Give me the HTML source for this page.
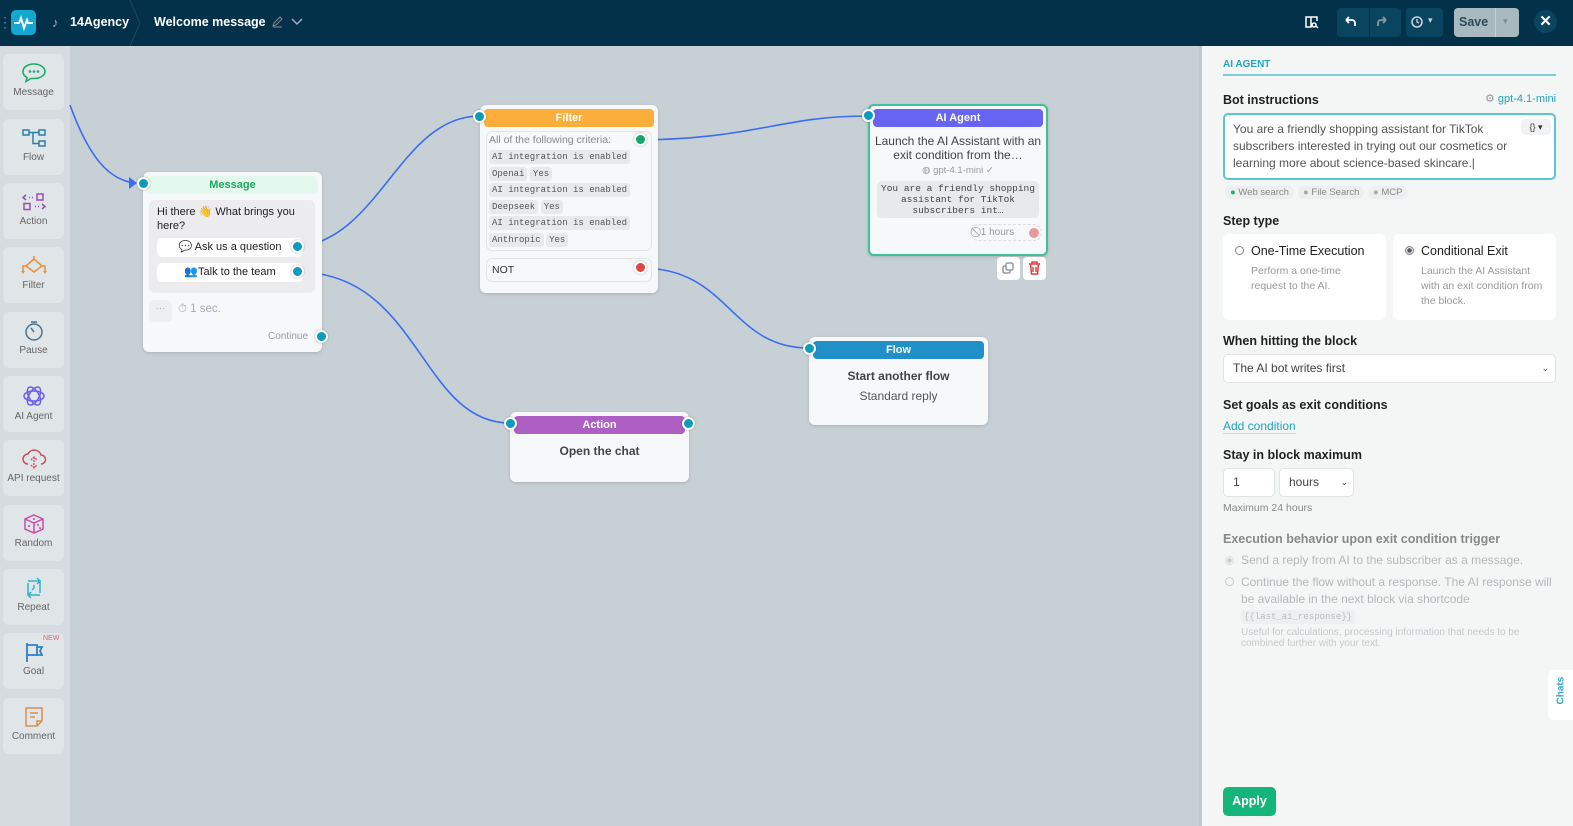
<!DOCTYPE html>
<html><head><meta charset="utf-8"><style>
*{box-sizing:border-box;margin:0;padding:0}
body{width:1573px;height:826px;overflow:hidden;font-family:"Liberation Sans",sans-serif;background:#c6d0d5;position:relative;color:#333}
.abs{position:absolute}
.top{left:0;top:0;width:1573px;height:46px;background:#03314a}
.side{left:0;top:46px;width:70px;height:780px;background:#d5dbde}
.sb{position:absolute;left:3px;width:61px;height:56px;background:#e0e5e8;border-radius:6px;text-align:center;font-size:10px;color:#666}
.sb svg{display:block;margin:8px auto 3px}
.node{position:absolute;background:#f7f8fa;border-radius:6px;box-shadow:0 1px 3px rgba(0,0,0,.15)}
.hdr{position:absolute;left:4px;right:4px;top:4px;height:18px;border-radius:4px;text-align:center;color:#fff;font-weight:bold;font-size:11px;line-height:18px}
.dot{position:absolute;width:13px;height:13px;border-radius:50%;border:2px solid #fff;background:#0a9cba;box-shadow:0 0 2px rgba(0,0,0,.3)}
.mono{font-family:"Liberation Mono",monospace;font-size:9px;line-height:12px;color:#555;background:#e8e9eb;border-radius:3px;padding:1px 3px;display:inline-block;vertical-align:top}
.panel{left:1199px;top:46px;width:374px;height:780px;background:#f4f6f6;border-left:3px solid #bfc9ce}
.lbl{position:absolute;left:22px;font-weight:bold;font-size:12.5px;color:#222}
.card{position:absolute;background:#fff;border-radius:6px}
.gray{color:#999}
</style></head><body>
<div class="abs top">
  <div class="abs" style="left:3px;top:15px;color:#9ab;font-size:12px;line-height:5px">·<br>·<br>·</div>
  <div class="abs" style="left:11px;top:10px;width:25px;height:25px;background:#15a8cf;border-radius:5px">
    <svg width="25" height="25" viewBox="0 0 25 25"><path d="M3 13h5l2-5 3 10 3-8 1 3h5" stroke="#fff" stroke-width="2" fill="none"/></svg></div>
  <div class="abs" style="left:52px;top:15px;color:#aab;font-size:13px">♪</div>
  <div class="abs" style="left:70px;top:15px;color:#fff;font-weight:bold;font-size:12.5px">14Agency</div>
  <svg class="abs" style="left:128px;top:0" width="14" height="46"><path d="M2 0l10 23-10 23" stroke="#23475c" fill="none"/></svg>
  <div class="abs" style="left:154px;top:15px;color:#fff;font-weight:bold;font-size:12.5px">Welcome message</div>
  <svg class="abs" style="left:271px;top:16px" width="12" height="12"><path d="M2 10l1-3 6-6 2 2-6 6zM2 11h9" stroke="#889" fill="none"/></svg>
  <svg class="abs" style="left:291px;top:18px" width="12" height="8"><path d="M1 1l5 5 5-5" stroke="#aab" stroke-width="1.5" fill="none"/></svg>
  <svg class="abs" style="left:1305px;top:15px" width="14" height="14"><path d="M1 2h5v10H1zM6 2h6v4M9 8a2 2 0 1 0 0.1 0M11 11l2 2" stroke="#fff" stroke-width="1.5" fill="none"/></svg>
  <div class="abs" style="left:1337px;top:8px;width:64px;height:29px;background:#0a4560;border-radius:4px"></div>
  <div class="abs" style="left:1369px;top:8px;width:1px;height:29px;background:#03314a"></div>
  <svg class="abs" style="left:1342px;top:14px" width="16" height="16"><path d="M4 6h6a3 3 0 0 1 3 3v3M4 6l3-3M4 6l3 3" stroke="#fff" stroke-width="1.8" fill="none"/></svg>
  <svg class="abs" style="left:1374px;top:14px" width="16" height="16"><path d="M12 6H7a3 3 0 0 0-3 3v3M12 6l-3-3M12 6l-3 3" stroke="#889aa5" stroke-width="1.8" fill="none"/></svg>
  <div class="abs" style="left:1406px;top:8px;width:37px;height:29px;background:#0a4560;border-radius:4px"></div>
  <svg class="abs" style="left:1410px;top:15px" width="14" height="14"><circle cx="7" cy="7" r="5" stroke="#ccd" stroke-width="1.6" fill="none"/><path d="M7 4v3l2 1" stroke="#ccd" stroke-width="1.4" fill="none"/></svg>
  <div class="abs" style="left:1428px;top:15px;color:#ccd;font-size:9px">▾</div>
  <div class="abs" style="left:1454px;top:8px;width:65px;height:29px;background:#a9b9c0;border-radius:4px"></div>
  <div class="abs" style="left:1459px;top:15px;color:#2c4b5b;font-weight:bold;font-size:12.5px">Save</div>
  <div class="abs" style="left:1495px;top:8px;width:1px;height:29px;background:#c5d0d5"></div>
  <div class="abs" style="left:1503px;top:16px;color:#789;font-size:9px">▾</div>
  <div class="abs" style="left:1534px;top:10px;width:23px;height:23px;background:#0a4560;border-radius:50%;color:#fff;text-align:center;line-height:23px;font-size:15px;font-weight:bold">✕</div>
</div>

<div class="abs side">
  <div class="sb" style="top:8px"><svg width="26" height="22" viewBox="0 0 26 22"><path d="M13 2C7 2 2 5 2 9.5c0 3 2 5 4 6l-1 4 5-3h3c6 0 11-3 11-7S19 2 13 2z" stroke="#1dab6a" stroke-width="1.6" fill="none"/><circle cx="9" cy="9.5" r="1.3" fill="#1dab6a"/><circle cx="13" cy="9.5" r="1.3" fill="#1dab6a"/><circle cx="17" cy="9.5" r="1.3" fill="#1dab6a"/></svg>Message</div>
  <div class="sb" style="top:73px"><svg width="26" height="22"><rect x="2" y="3" width="6" height="5" stroke="#2d7fa6" fill="none" stroke-width="1.5"/><rect x="18" y="3" width="6" height="5" stroke="#2d7fa6" fill="none" stroke-width="1.5"/><rect x="18" y="14" width="6" height="5" stroke="#2d7fa6" fill="none" stroke-width="1.5"/><path d="M8 5.5h10M12 5.5v11h6" stroke="#2d7fa6" stroke-width="1.5" fill="none"/></svg>Flow</div>
  <div class="sb" style="top:137px"><svg width="26" height="22"><path d="M5 4L2 6.5 5 9M8 6.5h1M11 6.5h1M21 13l3 2.5-3 2.5M14 15.5h1M17 15.5h1" stroke="#9b4cb8" stroke-width="1.5" fill="none"/><rect x="16" y="3" width="6" height="6" stroke="#9b4cb8" fill="none" stroke-width="1.5"/><rect x="3" y="12.5" width="6" height="6" stroke="#9b4cb8" fill="none" stroke-width="1.5"/></svg>Action</div>
  <div class="sb" style="top:201px"><svg width="28" height="22"><path d="M14 1v3M14 4l-8 7 8 6 8-6zM6 11H3v5M22 11h3v5" stroke="#e8903a" stroke-width="1.5" fill="none"/><path d="M1 16h4l-2 3zM23 16h4l-2 3z" fill="#e8903a"/></svg>Filter</div>
  <div class="sb" style="top:266px"><svg width="26" height="22"><circle cx="13" cy="12" r="8" stroke="#4a7390" stroke-width="1.5" fill="none"/><path d="M10 2h6M13 12l-3-4" stroke="#4a7390" stroke-width="1.5"/></svg>Pause</div>
  <div class="sb" style="top:330px"><svg width="26" height="24"><g stroke="#6b5cf0" stroke-width="1.5" fill="none"><ellipse cx="13" cy="12" rx="10" ry="5"/><ellipse cx="13" cy="12" rx="10" ry="5" transform="rotate(60 13 12)"/><ellipse cx="13" cy="12" rx="10" ry="5" transform="rotate(120 13 12)"/></g></svg>AI Agent</div>
  <div class="sb" style="top:394px"><svg width="26" height="22"><path d="M7 16a5 5 0 0 1 0-10 7 7 0 0 1 13 1 4 4 0 0 1 0 9" stroke="#d14a58" stroke-width="1.5" fill="none"/><path d="M13 9v11M10 12l3-3 3 3M10 17l3 3 3-3" stroke="#d14a58" stroke-width="1.3" fill="none" stroke-dasharray="2 1"/></svg>API request</div>
  <div class="sb" style="top:459px"><svg width="26" height="22"><path d="M13 2l9 4v10l-9 4-9-4V6zM4 6l9 4 9-4M13 10v10" stroke="#c94aa8" stroke-width="1.5" fill="none"/><circle cx="13" cy="6" r="1" fill="#c94aa8"/><circle cx="8" cy="13" r="1" fill="#c94aa8"/><circle cx="17" cy="12" r="1" fill="#c94aa8"/><circle cx="19" cy="15" r="1" fill="#c94aa8"/></svg>Random</div>
  <div class="sb" style="top:523px"><svg width="26" height="22"><path d="M7 4h12v12M19 18H7V6M16 1l3 3-3 3M10 15l-3 3 3 3M13 8v3l-2 2" stroke="#2fb3d0" stroke-width="1.5" fill="none"/></svg>Repeat</div>
  <div class="sb" style="top:587px"><svg width="26" height="22"><path d="M6 2v19M6 4h10v10H6M16 6h5l-2 4 2 4h-5" stroke="#2d7fc8" stroke-width="1.8" fill="none"/></svg>Goal<div class="abs" style="left:40px;top:2px;color:#e0646a;font-size:7px">NEW</div></div>
  <div class="sb" style="top:652px"><svg width="26" height="22"><path d="M5 2h16v13l-5 5H5zM16 20v-5h5M9 7h8M9 11h5" stroke="#d89050" stroke-width="1.5" fill="none"/></svg>Comment</div>
</div>

<svg class="abs" style="left:0;top:0" width="1200" height="826">
<g stroke="#3a6df0" stroke-width="1.6" fill="none">
<path d="M70 105C90 160 110 180 135 183"/>
<path d="M297 247C380 240 400 116 480 116"/>
<path d="M297 272C420 272 420 423 510 423"/>
<path d="M641 140C760 138 780 116 868 116"/>
<path d="M641 268C730 268 730 348 809 348"/>
</g>
<path d="M129 177l8 6-8 6z" fill="#3a6df0"/>
</svg>

<!-- Message node -->
<div class="node" style="left:143px;top:172px;width:179px;height:180px">
  <div class="hdr" style="background:#e4f9ee;color:#1aaa5d">Message</div>
  <div class="abs" style="left:6px;top:28px;width:166px;height:93px;background:#ececee;border-radius:6px"></div>
  <div class="abs" style="left:14px;top:33px;font-size:11px;color:#222;width:150px;line-height:14px">Hi there 👋 What brings you here?</div>
  <div class="abs" style="left:14px;top:66px;width:146px;height:19px;background:#fff;border-radius:5px;font-size:11px;line-height:19px;text-align:center;color:#222"><span style="color:#b9a3d9">💬</span> Ask us a question</div>
  <div class="abs" style="left:14px;top:91px;width:146px;height:19px;background:#fff;border-radius:5px;font-size:11px;line-height:19px;text-align:center;color:#222"><span style="color:#6a3fa0">👥</span>Talk to the team</div>
  <div class="abs" style="left:6px;top:128px;width:23px;height:22px;background:#eeeff1;border-radius:5px;color:#aaa;font-size:10px;text-align:center;line-height:18px">···</div>
  <div class="abs gray" style="left:35px;top:131px;font-size:11.5px;color:#aab">⏱ 1 sec.</div>
  <div class="abs" style="left:125px;top:159px;font-size:10px;color:#99a">Continue</div>
</div>
<div class="dot" style="left:137px;top:177px"></div>
<div class="dot" style="left:291px;top:240px"></div>
<div class="dot" style="left:291px;top:265px"></div>
<div class="dot" style="left:315px;top:330px"></div>

<!-- Filter -->
<div class="node" style="left:480px;top:105px;width:178px;height:188px">
  <div class="hdr" style="background:#fbae3c">Filter</div>
  <div class="abs" style="left:6px;top:26px;width:166px;height:120px;border:1px solid #e3e4e6;border-radius:6px;background:#f7f8fa"></div>
  <div class="abs" style="left:9px;top:29px;font-size:10.5px;color:#888">All of the following criteria:</div>
  <div class="abs" style="left:9px;top:45px;line-height:16.5px;width:165px;font-size:9px">
    <span class="mono">AI integration is enabled</span><br>
    <span class="mono">Openai</span> <span class="mono">Yes</span><br>
    <span class="mono">AI integration is enabled</span><br>
    <span class="mono">Deepseek</span> <span class="mono">Yes</span><br>
    <span class="mono">AI integration is enabled</span><br>
    <span class="mono">Anthropic</span> <span class="mono">Yes</span>
  </div>
  <div class="abs" style="left:6px;top:153px;width:166px;height:24px;border:1px solid #e3e4e6;border-radius:6px;font-size:10.5px;line-height:22px;padding-left:5px">NOT</div>
</div>
<div class="dot" style="left:473px;top:110px"></div>
<div class="dot" style="left:634px;top:133px;background:#13a86b"></div>
<div class="dot" style="left:634px;top:261px;background:#e04848"></div>

<!-- AI Agent -->
<div class="node" style="left:868px;top:104px;width:180px;height:152px;border:2px solid #3ec098">
  <div class="hdr" style="background:#6764f2;left:3px;right:3px;top:3px">AI Agent</div>
  <div class="abs" style="left:4px;right:4px;top:28px;text-align:center;font-size:12px;color:#444;line-height:14px">Launch the AI Assistant with an exit condition from the…</div>
  <div class="abs" style="left:0;right:0;top:59px;text-align:center;font-size:9.5px;color:#999">◍ gpt-4.1-mini ✓</div>
  <div class="abs" style="left:7px;right:7px;top:75px;height:37px;background:#e8e9eb;border-radius:5px;text-align:center;font-family:'Liberation Mono',monospace;font-size:9.5px;line-height:11px;color:#444;padding-top:2px">You are a friendly shopping assistant for TikTok subscribers int…</div>
  <div class="abs" style="left:100px;top:118px;width:72px;height:17px;border:1px dashed #ddd;border-radius:9px;font-size:10px;color:#999;line-height:15px;padding-left:7px">⃠ 1 hours</div>
  <div class="abs" style="left:159px;top:122px;width:10px;height:10px;border-radius:50%;background:#e89a9a"></div>
</div>
<div class="dot" style="left:862px;top:109px"></div>
<div class="abs" style="left:997px;top:257px;width:23px;height:23px;background:#fff;border-radius:4px">
<svg width="23" height="23"><rect x="6" y="9" width="7" height="7" rx="1.5" stroke="#889" fill="none" stroke-width="1.3"/><rect x="9" y="6" width="7" height="7" rx="1.5" stroke="#889" fill="#fff" stroke-width="1.3"/></svg></div>
<div class="abs" style="left:1023px;top:257px;width:23px;height:23px;background:#fff;border-radius:4px">
<svg width="23" height="23"><path d="M6 7h11M9 7V5h5v2M7.5 7l1 10h6l1-10M10 10v5M13 10v5" stroke="#e53b3b" stroke-width="1.5" fill="none"/></svg></div>

<!-- Flow -->
<div class="node" style="left:809px;top:337px;width:179px;height:88px">
  <div class="hdr" style="background:#2290c8">Flow</div>
  <div class="abs" style="left:0;right:0;top:32px;text-align:center;font-size:12px;font-weight:bold;color:#444">Start another flow</div>
  <div class="abs" style="left:0;right:0;top:52px;text-align:center;font-size:12px;color:#555">Standard reply</div>
</div>
<div class="dot" style="left:803px;top:342px"></div>

<!-- Action -->
<div class="node" style="left:510px;top:412px;width:179px;height:70px">
  <div class="hdr" style="background:#ad5fc4">Action</div>
  <div class="abs" style="left:0;right:0;top:32px;text-align:center;font-size:12px;font-weight:bold;color:#444">Open the chat</div>
</div>
<div class="dot" style="left:504px;top:417px"></div>
<div class="dot" style="left:682px;top:417px"></div>

<!-- Panel -->
<div class="abs panel">
 <div class="abs" style="left:3px;top:0;width:371px;height:780px">
  <div class="abs" style="left:18px;top:13px;font-size:10px;font-weight:bold;color:#21a4bf">AI AGENT</div>
  <div class="abs" style="left:18px;top:28px;width:333px;height:2px;background:#7ccdd7"></div>
  <div class="lbl" style="top:47px;left:18px">Bot instructions</div>
  <div class="abs" style="left:280px;top:46px;font-size:11px;color:#21a4bf"><span style="color:#999">⚙</span> gpt-4.1-mini</div>
  <div class="abs" style="left:18px;top:67px;width:333px;height:67px;background:#fff;border:2px solid #5cc5d3;border-radius:5px;padding:6px 8px;font-size:12px;line-height:17px;color:#555">You are a friendly shopping assistant for TikTok subscribers interested in trying out our cosmetics or learning more about science-based skincare.|</div>
  <div class="abs" style="left:316px;top:73px;width:30px;height:16px;background:#f1f2f4;border-radius:4px;font-size:9px;text-align:center;line-height:16px;color:#333">{} ▾</div>
  <div class="abs" style="left:20px;top:140px;font-size:9.5px;color:#888;background:#eceef0;border-radius:8px;padding:1px 5px"><span style="color:#1cb36f">●</span> Web search</div>
  <div class="abs" style="left:93px;top:140px;font-size:9.5px;color:#888;background:#eceef0;border-radius:8px;padding:1px 5px"><span style="color:#aaa">●</span> File Search</div>
  <div class="abs" style="left:163px;top:140px;font-size:9.5px;color:#888;background:#eceef0;border-radius:8px;padding:1px 5px"><span style="color:#aaa">●</span> MCP</div>
  <div class="lbl" style="top:168px;left:18px">Step type</div>
  <div class="card" style="left:18px;top:188px;width:163px;height:86px">
    <div class="abs" style="left:12px;top:12px;width:9px;height:9px;border:1px solid #888;border-radius:50%"></div>
    <div class="abs" style="left:28px;top:10px;font-size:12.5px;color:#222">One-Time Execution</div>
    <div class="abs" style="left:28px;top:30px;font-size:10.5px;color:#999;line-height:15px;width:125px">Perform a one-time request to the AI.</div>
  </div>
  <div class="card" style="left:188px;top:188px;width:163px;height:86px">
    <div class="abs" style="left:12px;top:12px;width:9px;height:9px;border:1px solid #888;border-radius:50%;background:radial-gradient(#556 40%,#dde 50%)"></div>
    <div class="abs" style="left:28px;top:10px;font-size:12.5px;color:#222">Conditional Exit</div>
    <div class="abs" style="left:28px;top:30px;font-size:10.5px;color:#999;line-height:15px;width:125px">Launch the AI Assistant with an exit condition from the block.</div>
  </div>
  <div class="lbl" style="top:288px;left:18px">When hitting the block</div>
  <div class="abs" style="left:18px;top:308px;width:333px;height:29px;background:#fff;border:1px solid #e0e3e6;border-radius:5px;font-size:12px;line-height:27px;padding-left:9px;color:#444">The AI bot writes first<span style="position:absolute;right:6px;font-size:9px;color:#555">⌄</span></div>
  <div class="lbl" style="top:352px;left:18px">Set goals as exit conditions</div>
  <div class="abs" style="left:18px;top:373px;font-size:12px;color:#21a4bf;border-bottom:1px solid #b7e2ea">Add condition</div>
  <div class="lbl" style="top:402px;left:18px">Stay in block maximum</div>
  <div class="abs" style="left:18px;top:422px;width:52px;height:29px;background:#fff;border:1px solid #e0e3e6;border-radius:5px;font-size:12px;line-height:27px;padding-left:9px;color:#444">1</div>
  <div class="abs" style="left:74px;top:422px;width:75px;height:29px;background:#fff;border:1px solid #e0e3e6;border-radius:5px;font-size:12px;line-height:27px;padding-left:9px;color:#444">hours<span style="position:absolute;right:5px;font-size:9px">⌄</span></div>
  <div class="abs" style="left:18px;top:456px;font-size:10.5px;color:#888">Maximum 24 hours</div>
  <div class="abs" style="left:18px;top:486px;font-size:12.5px;color:#888;font-weight:bold">Execution behavior upon exit condition trigger</div>
  <div class="abs" style="left:20px;top:510px;width:9px;height:9px;border-radius:50%;background:radial-gradient(#ccc 40%,#eee 50%);border:1px solid #ddd"></div>
  <div class="abs" style="left:36px;top:507px;font-size:12px;color:#b5b8bb">Send a reply from AI to the subscriber as a message.</div>
  <div class="abs" style="left:20px;top:531px;width:9px;height:9px;border-radius:50%;border:1px solid #ccc"></div>
  <div class="abs" style="left:36px;top:528px;font-size:12px;color:#b5b8bb;line-height:17px;width:315px">Continue the flow without a response. The AI response will be available in the next block via shortcode</div>
  <div class="abs mono" style="left:36px;top:564px;color:#bbb;background:#eeeff0">{{last_ai_response}}</div>
  <div class="abs" style="left:36px;top:581px;font-size:10px;color:#c5c8cb;line-height:11px;width:315px">Useful for calculations, processing information that needs to be combined further with your text.</div>
  <div class="abs" style="left:18px;top:741px;width:53px;height:29px;background:#13b57a;border-radius:5px;color:#fff;font-weight:bold;font-size:12.5px;text-align:center;line-height:29px">Apply</div>
 </div>
  <div class="abs" style="left:346px;top:624px;width:26px;height:50px;background:#fff;border-radius:6px 0 0 6px"></div>
  <div class="abs" style="left:346px;top:640px;width:26px;font-size:10px;font-weight:bold;color:#35a8c8;transform:rotate(-90deg);transform-origin:center;text-align:center">Chats</div>
</div>
</body></html>
